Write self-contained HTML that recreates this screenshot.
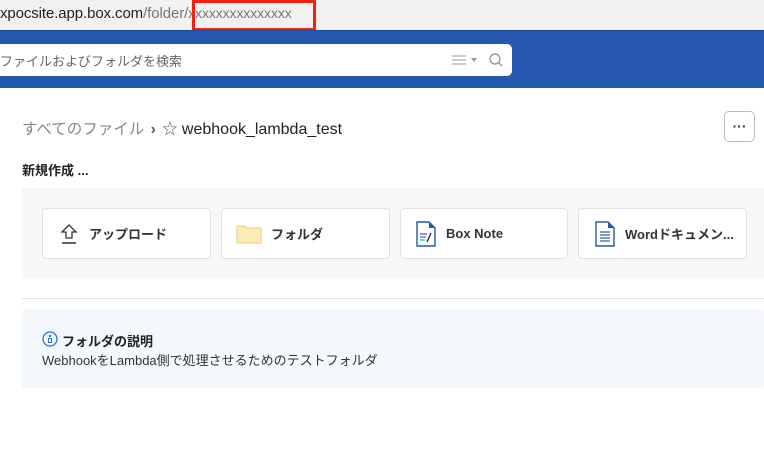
<!DOCTYPE html>
<html><head><meta charset="utf-8"><style>
*{box-sizing:border-box;margin:0;padding:0}
body{width:764px;height:470px;overflow:hidden;background:#fff;font-family:"Liberation Sans","Noto Sans CJK JP",sans-serif;position:relative;color:#222}
.abs{position:absolute}
.url{left:0;top:0;width:764px;height:30px;background:#f1f1f2}
.blue{left:0;top:30px;width:764px;height:58px;background:#2559b0;border-top:1px solid #1e4a96}
.search{left:-6px;top:44px;width:518px;height:32px;background:#fff;border-radius:5px}
.card{top:208px;height:51px;background:#fff;border:1px solid #e2e2e2;border-radius:4px;font-size:13px;font-weight:bold;color:#333;display:flex;align-items:center}
</style></head><body>
<div class="abs url"></div>
<div class="abs" style="left:0;top:5px;font-size:15px;color:#222;white-space:nowrap;letter-spacing:-0.1px">xpocsite.app.box.com<span style="color:#777">/folder/</span><span style="color:#777;font-size:14px">xxxxxxxxxxxxxxx</span></div>
<div class="abs" style="left:192px;top:0;width:124px;height:31px;border:3px solid #f5200e"></div>
<div class="abs blue"></div>
<div class="abs search"></div>
<div class="abs" style="left:0;top:51px;font-size:13px;color:#666">ファイルおよびフォルダを検索</div>
<svg class="abs" style="left:450px;top:52px" width="60" height="16" viewBox="0 0 60 16">
<g stroke="#999" stroke-width="1"><line x1="2" y1="4" x2="16" y2="4"/><line x1="2" y1="8" x2="16" y2="8"/><line x1="2" y1="12" x2="16" y2="12"/></g>
<path d="M21 6h6l-3 4z" fill="#999"/>
<circle cx="45" cy="7" r="5" fill="none" stroke="#999" stroke-width="1.4"/><line x1="48.5" y1="10.5" x2="52" y2="14" stroke="#999" stroke-width="1.4"/>
</svg>
<div class="abs" style="left:22px;top:117px;font-size:15.5px;color:#888;white-space:nowrap">すべてのファイル <span style="color:#555;font-weight:bold;margin:0 2px">›</span> <span style="color:#666">☆</span> <span style="color:#222;font-size:16px">webhook_lambda_test</span></div>
<div class="abs" style="left:724px;top:111px;width:31px;height:31px;border:1px solid #bbb;border-radius:5px;text-align:center;font-size:14px;line-height:28px;color:#333;font-weight:bold">···</div>
<div class="abs" style="left:22px;top:160px;font-size:13px;font-weight:bold;color:#222">新規作成 ...</div>
<div class="abs" style="left:22px;top:188px;width:742px;height:90px;background:#f7f7f7"></div>
<div class="abs card" style="left:42px;width:169px"><svg style="margin:0 10px 0 16px" width="20" height="22" viewBox="0 0 20 22"><path d="M10 2L3 9h4v6h6V9h4z" fill="none" stroke="#333" stroke-width="1.3"/><line x1="3" y1="20" x2="17" y2="20" stroke="#333" stroke-width="1.5"/></svg>アップロード</div>
<div class="abs card" style="left:221px;width:169px"><svg style="margin:0 9px 0 14px" width="26" height="20" viewBox="0 0 26 20"><path d="M1 2h8l2 2h14v15H1z" fill="#fdebb8" stroke="#ecc878"/></svg>フォルダ</div>
<div class="abs card" style="left:400px;width:168px"><svg style="margin:0 10px 0 15px" width="20" height="26" viewBox="0 0 20 26"><path d="M1 1h12l6 6v18H1z" fill="#fff" stroke="#2559b0" stroke-width="1.4"/><path d="M13 1v6h6z" fill="#2559b0"/><line x1="4" y1="13" x2="11" y2="13" stroke="#a33cd8" stroke-width="1.4"/><line x1="4" y1="16" x2="10" y2="16" stroke="#3a8ee6" stroke-width="1.4"/><line x1="4" y1="19" x2="9" y2="19" stroke="#2bc6a8" stroke-width="1.4"/><line x1="11" y1="21" x2="15" y2="12" stroke="#222" stroke-width="1.3"/></svg>Box Note</div>
<div class="abs card" style="left:578px;width:169px"><svg style="margin:0 10px 0 16px" width="20" height="26" viewBox="0 0 20 26"><path d="M1 1h12l6 6v18H1z" fill="#fff" stroke="#2559b0" stroke-width="1.4"/><path d="M13 1v6h6z" fill="#2559b0"/><g stroke="#2559b0" stroke-width="1.2"><line x1="5" y1="11" x2="15" y2="11"/><line x1="5" y1="14" x2="15" y2="14"/><line x1="5" y1="17" x2="15" y2="17"/><line x1="5" y1="20" x2="15" y2="20"/></g></svg>Wordドキュメン...</div>
<div class="abs" style="left:22px;top:298px;width:742px;height:1px;background:#e4e4e4"></div>
<div class="abs" style="left:22px;top:309px;width:742px;height:79px;background:#f4f7fc;border-radius:3px"></div>
<svg class="abs" style="left:42px;top:331px" width="16" height="16" viewBox="0 0 16 16"><circle cx="8" cy="8" r="7" fill="none" stroke="#2e6ee0" stroke-width="1.3"/><circle cx="8" cy="5" r="1.2" fill="#2e6ee0"/><rect x="6.5" y="7.5" width="3" height="4" fill="none" stroke="#2e6ee0"/></svg>
<div class="abs" style="left:62px;top:331px;font-size:13px;font-weight:bold;color:#222">フォルダの説明</div>
<div class="abs" style="left:42px;top:350px;font-size:13px;color:#333">WebhookをLambda側で処理させるためのテストフォルダ</div>
</body></html>
